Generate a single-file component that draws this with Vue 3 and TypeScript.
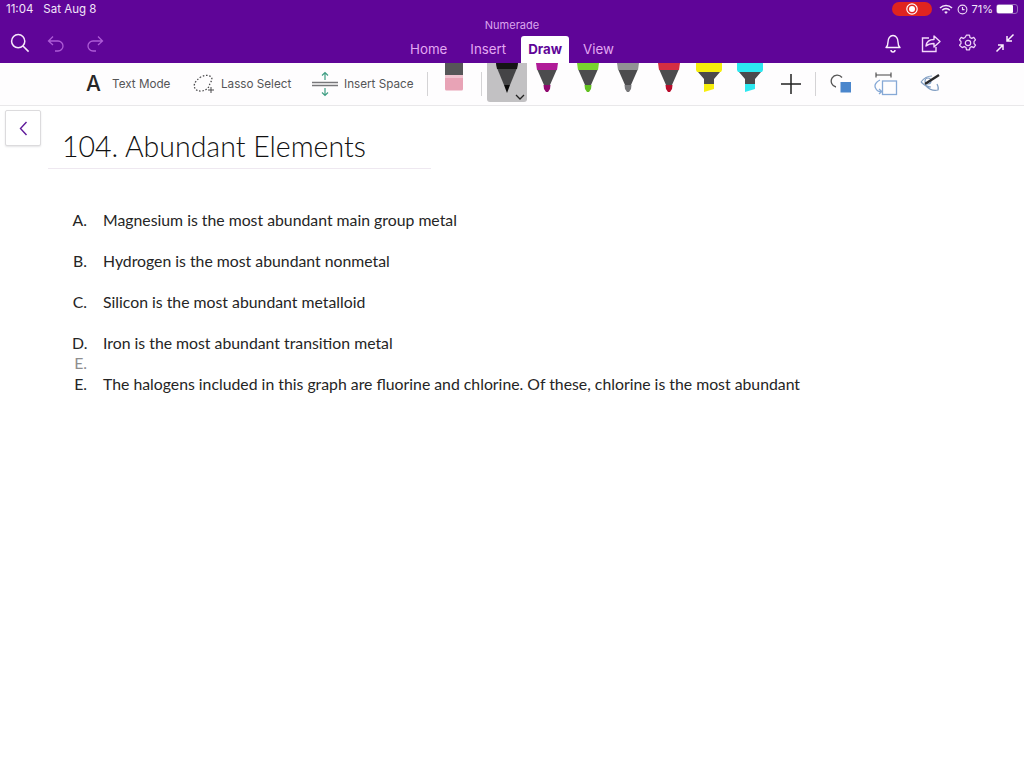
<script setup lang="ts">
interface Pen { band: string; tip: string; body: string }
interface Line { mark: string; text: string; muted?: boolean; gap?: boolean }

const tabs: string[] = ['Home', 'Insert', 'Draw', 'View']
const pens: Pen[] = [
  { band: '#b01c98', tip: '#90096f', body: '#4c4c4e' },
  { band: '#78d42e', tip: '#62c021', body: '#4c4c4e' },
  { band: '#929294', tip: '#77777a', body: '#4c4c4e' },
  { band: '#d42e42', tip: '#b80c2c', body: '#4c4c4e' }
]
const highlighters: string[] = ['#f6ee0c', '#2de8f0']
const lines: Line[] = [
  { mark: 'A.', text: 'Magnesium is the most abundant main group metal', gap: true },
  { mark: 'B.', text: 'Hydrogen is the most abundant nonmetal', gap: true },
  { mark: 'C.', text: 'Silicon is the most abundant metalloid', gap: true },
  { mark: 'D.', text: 'Iron is the most abundant transition metal' },
  { mark: 'E.', text: '', muted: true },
  { mark: 'E.', text: 'The halogens included in this graph are fluorine and chlorine. Of these, chlorine is the most abundant' }
]
</script>

<template>
  <div class="app">
    <header class="head">
      <div class="status">
        <div class="clock"><span>11:04</span><span>Sat Aug 8</span></div>
        <div class="sys">
          <span class="rec"><svg width="14" height="14" viewBox="0 0 14 14"><circle cx="7" cy="7" r="5.2" fill="none" stroke="#fff" stroke-width="1.2"/><circle cx="7" cy="7" r="3" fill="#fff"/></svg></span>
          <svg class="wifi" width="14" height="11" viewBox="0 0 14 11"><path d="M1 4a8.500 8.500 0 0 1 12 0M3.200 6.200a5.400 5.400 0 0 1 7.600 0" fill="none" stroke="#f3e6fa" stroke-width="1.600"/><path d="M5.200 8.100a2.600 2.600 0 0 1 3.600 0L7 10z" fill="#f3e6fa"/></svg>
          <svg width="11" height="11" viewBox="0 0 11 11"><circle cx="5.500" cy="5.500" r="4.400" fill="none" stroke="#eed9f6" stroke-width="1.100"/><path d="M5.500 3v2.600h2" fill="none" stroke="#eed9f6" stroke-width="1.200"/></svg>
          <span class="pct">71%</span>
          <span class="battery"><i></i></span>
        </div>
      </div>
      <div class="bar">
        <div class="side">
          <svg width="20" height="20" viewBox="0 0 20 20"><circle cx="8.200" cy="8.200" r="6.600" fill="none" stroke="#f7e9fb" stroke-width="1.500"/><path d="M13 13l5.600 5.600" stroke="#f7e9fb" stroke-width="1.600" fill="none"/></svg>
          <svg class="undo" width="18" height="18" viewBox="0 0 18 18"><path d="M6 2.500L1.500 7 6 11M1.500 7H11a5 5 0 0 1 0 10H8" fill="none" stroke="#ad5bd6" stroke-width="1.300"/></svg>
          <svg class="redo" width="18" height="18" viewBox="0 0 18 18"><path d="M12 2.500L16.500 7 12 11M16.500 7H7a5 5 0 0 0 0 10h3" fill="none" stroke="#ad5bd6" stroke-width="1.300"/></svg>
        </div>
        <div class="center">
          <div class="doc">Numerade</div>
          <nav class="tabs">
            <span v-for="t in tabs" :key="t" class="tab" :class="{ active: t === 'Draw' }">{{ t }}</span>
          </nav>
        </div>
        <div class="side right">
          <svg class="bell" width="18" height="20" viewBox="0 0 18 20"><path d="M2 14.500c1.600-1.400 2-2.800 2-5.500 0-3.500 2-6.500 5-6.500s5 3 5 6.500c0 2.700.4 4.100 2 5.500z" fill="none" stroke="#fbf0fd" stroke-width="1.400" stroke-linejoin="round"/><path d="M7 17a2 2 0 0 0 4 0" fill="none" stroke="#fbf0fd" stroke-width="1.400"/></svg>
          <svg class="share" width="20" height="20" viewBox="0 0 20 20"><path d="M8 5H1.500v13.500H15V14" fill="none" stroke="#f4d9fa" stroke-width="1.400"/><path d="M5 13c.5-4 3.500-6.500 8-6.500V3l6 5.500-6 5.500v-3.500c-3.500 0-6 .8-8 2.500z" fill="none" stroke="#f4d9fa" stroke-width="1.400" stroke-linejoin="round"/></svg>
          <svg class="gear" width="18" height="18" viewBox="0 0 18 18"><circle cx="9" cy="9" r="2.700" fill="none" stroke="#f0d4f8" stroke-width="1.200"/><path d="M7.500 1.200h3l.5 2.300 1.700.9 2.100-1 1.700 2.400-1.500 1.700v2l1.500 1.700-1.700 2.400-2.100-1-1.700.9-.5 2.300h-3l-.5-2.300-1.700-.9-2.100 1L.5 11.200 2 9.500v-2L.5 5.800l1.700-2.400 2.100 1L6 3.500z" fill="none" stroke="#f0d4f8" stroke-width="1.200" stroke-linejoin="round"/></svg>
          <svg width="20" height="20" viewBox="0 0 20 20"><path d="M18.500 1.500L12 8M12 3v5h5M1.500 18.500L8 12M3 12h5v5" fill="none" stroke="#fbf0fd" stroke-width="1.500"/></svg>
        </div>
      </div>
    </header>

    <section class="tools">
      <span class="bigA">A</span>
      <span class="label mode">Text Mode</span>
      <svg class="lasso" width="22" height="20" viewBox="0 0 22 20"><path d="M7 3.500C10 1 17 .5 18.500 3.500 20 6.500 17 8 16.500 11c-.3 2-3 5.500-8 6C3 17.500.5 14 1.500 10 2 8 4.500 5.500 7 3.500z" fill="none" stroke="#4a4a4c" stroke-width="1.300" stroke-dasharray="1.500 1.700"/><path d="M15 16h6M18 13v6" stroke="#4a4a4c" stroke-width="1"/></svg>
      <span class="label select">Lasso Select</span>
      <svg class="space" width="26" height="26" viewBox="0 0 26 26"><path d="M0 11.500h26M0 14.500h26" stroke="#77777a" stroke-width="1.300"/><path d="M13 9V2M10 4.500L13 1.500l3 3M13 17v7M10 21.500l3 3 3-3" fill="none" stroke="#3f9e83" stroke-width="1.200"/></svg>
      <span class="label insert">Insert Space</span>
      <i class="rule r1"></i>
      <svg class="eraser" width="20" height="28" viewBox="0 0 20 28"><path d="M1 0h18v13H1z" fill="#565658"/><path d="M1 12h18v14a1.500 1.500 0 0 1-1.500 1.500h-15A1.500 1.500 0 0 1 1 26z" fill="#e8a3b6"/><path d="M1 12h18v3H1z" fill="#f0c3d0"/></svg>
      <i class="rule r2"></i>
      <div class="active-pen">
        <svg width="24" height="32" viewBox="0 0 24 32"><path d="M1 0h22l-1 5-7 17H9L2 5z" fill="#444446"/><path d="M1 0h22l-1 6H2z" fill="#151516"/><path d="M9 22h6l-3 8z" fill="#0a0a0a"/></svg>
        <svg class="chev" width="10" height="6" viewBox="0 0 10 6"><path d="M1 1l4 4 4-4" fill="none" stroke="#222" stroke-width="1.300"/></svg>
      </div>
      <div class="pens">
        <svg v-for="p in pens" :key="p.band" width="24" height="32" viewBox="0 0 24 32"><path d="M2 6h20l-7 16H9z" :fill="p.body"/><path d="M1 0h22l-1 7H2z" :fill="p.band"/><path d="M8.500 22h7l-.5 4-2 3h-2l-2-3z" :fill="p.tip"/></svg>
        <svg v-for="h in highlighters" :key="h" width="26" height="32" viewBox="0 0 26 32"><path d="M0 0h26v7l-1 2H1L0 7z" :fill="h"/><path d="M2 9h22l-6 7v5H8v-5z" fill="#4c4a4c"/><path d="M8 21h10v5L8 29z" :fill="h"/></svg>
      </div>
      <svg class="plus" width="20" height="20" viewBox="0 0 20 20"><path d="M0 10h20M10 0v20" stroke="#222" stroke-width="1.500"/></svg>
      <i class="rule r3"></i>
      <svg class="shape" width="22" height="20" viewBox="0 0 22 20"><path d="M12 3.500A6 6 0 1 0 6 13" fill="none" stroke="#555" stroke-width="1.300"/><rect x="10.500" y="8" width="10.500" height="10.500" fill="#4a86cc"/></svg>
      <svg class="convert" width="26" height="24" viewBox="0 0 26 24"><path d="M2 3h15M2 .5v5M17 .5v5" fill="none" stroke="#444" stroke-width="1.100"/><rect x="8.500" y="9" width="14" height="13.500" fill="none" stroke="#86a9d6" stroke-width="1.300"/><path d="M6 8C2 10 0 13 1.500 16c1.200 2.500 3.500 4 6 3.500M5 17l2.800 2.500L5 22" fill="none" stroke="#86a9d6" stroke-width="1.300"/></svg>
      <svg class="ink" width="24" height="20" viewBox="0 0 24 20"><path d="M1 9c3-4 7-6 11-6M1 9c3 3 6 5 10 5M6 13c3 3 8 5 12 4 1-2 0-4-1-6" fill="none" stroke="#7f9dc2" stroke-width="1.200"/><circle cx="8" cy="8" r="3" fill="none" stroke="#7f9dc2" stroke-width="1.200"/><path d="M5 11L19 2" stroke="#2a2a2c" stroke-width="2.400"/></svg>
    </section>

    <main class="page">
      <button class="back" type="button" aria-label="Back"><svg width="9" height="15" viewBox="0 0 9 15"><path d="M7.500 1L1.500 7.500l6 6.500" fill="none" stroke="#5f1a9a" stroke-width="1.400"/></svg></button>
      <div class="note">
        <h1>104. Abundant Elements</h1>
        <ol class="list">
          <li v-for="(l, i) in lines" :key="i" :class="{ gap: l.gap, muted: l.muted }">
            <span class="mark">{{ l.mark }}</span><span>{{ l.text }}</span>
          </li>
        </ol>
      </div>
    </main>
  </div>
</template>

<style>
html, body { margin: 0; background: #fff; }
</style>

<style scoped>
.app { width: 1024px; height: 768px; display: flex; flex-direction: column; background: #fff; overflow: hidden; font-family: Inter, "Liberation Sans", sans-serif; }
.head { height: 63px; background: #5f0598; color: #fff; flex: none; }
.status { height: 17px; display: flex; justify-content: space-between; align-items: center; padding: 1px 4px 0 6px; box-sizing: border-box; font-size: 11.500px; color: #f3e6fa; }
.clock { display: flex; gap: 10px; }
.sys { display: flex; align-items: center; }
.rec { width: 40px; height: 14px; border-radius: 7px; background: #e0241f; display: flex; align-items: center; justify-content: center; margin-right: 7px; }
.wifi { margin-right: 4px; }
.pct { margin: 0 3px 0 3px; font-size: 11px; }
.battery { width: 22px; height: 10px; border: 1px solid #9a6cbc; border-radius: 3px; box-sizing: border-box; display: block; margin-right: 2px; }
.battery i { display: block; width: 78%; height: 100%; background: #fff; border-radius: 1px; }
.bar { height: 46px; display: grid; grid-template-columns: 1fr auto 1fr; }
.side { display: flex; align-items: center; padding: 0 0 0 10px; height: 36px; margin-top: 8px; }
.undo { margin-left: 17px; }
.redo { margin-left: 21px; }
.right { justify-content: flex-end; padding: 0 9px 0 0; gap: 18px; }
.bell { margin-right: 1px; }
.share { margin-right: 0; }
.center { display: flex; flex-direction: column; align-items: center; }
.doc { font-size: 11px; color: #dba6ee; line-height: 14px; margin-top: 1px; }
.tabs { display: flex; gap: 0; margin-top: 4px; align-items: flex-end; }
.tab { font-size: 13.300px; line-height: 27px; height: 27px; color: #e3a8f2; }
.tab:first-child { padding-right: 23px; }
.tab:nth-child(2) { padding-right: 15px; }
.tab:last-child { margin-left: 14px; }
.active { background: #fff; color: #5f0598; font-weight: 700; border-radius: 3px 3px 0 0; width: 48px; text-align: center; box-sizing: border-box; }
.tools { height: 42px; flex: none; display: flex; align-items: flex-start; background: #fefdfe; border-bottom: 1px solid #e9e8ea; }
.bigA { margin: 8px 0 0 86px; font-size: 21px; line-height: 25px; font-weight: 500; color: #262628; width: 15px; }
.label { font-size: 11.700px; line-height: 42px; color: #555557; white-space: nowrap; }
.mode { margin-left: 11px; width: 58px; }
.lasso { margin: 11px 0 0 23px; }
.select { margin-left: 6px; width: 72px; }
.space { margin: 8px 0 0 19px; }
.insert { margin-left: 6px; width: 70px; }
.rule { display: block; width: 1px; height: 24px; background: #d4d3d5; margin-top: 9px; flex: none; }
.r1 { margin-left: 13px; }
.eraser { margin: 0 0 0 16px; }
.r2 { margin-left: 17px; }
.active-pen { width: 40px; height: 39px; margin-left: 5px; background: #c2c1c3; border-radius: 0 0 3px 3px; display: flex; justify-content: center; position: relative; }
.chev { position: absolute; right: 2px; bottom: 2px; }
.pens { display: flex; margin-left: 8px; gap: 16.600px; }
.pens svg:nth-child(5) { margin-left: -1.500px; }
.pens svg:nth-child(6) { margin-left: -1px; }
.plus { margin: 11px 0 0 18px; }
.r3 { margin-left: 14px; }
.shape { margin: 11px 0 0 14px; }
.convert { margin: 9px 0 0 22px; }
.ink { margin: 10px 0 0 20px; }
.page { flex: 1; display: flex; align-items: flex-start; }
.back { width: 36px; height: 36px; margin: 4px 0 0 5px; padding: 0; background: #fff; border: 1px solid #dcdbdd; border-radius: 2px; box-shadow: 0 1px 2px #e4e4e6; display: flex; align-items: center; justify-content: center; flex: none; }
.note { margin-left: 7px; font-family: Lato, "Open Sans", sans-serif; color: #252525; }
h1 { width: 369px; margin: 0; padding: 21px 0 3px 14px; font-size: 28.500px; line-height: 38px; font-weight: 300; color: #111; border-bottom: 1px solid #eee8f0; }
.list { list-style: none; margin: 0; padding: 40.500px 0 0 24px; font-size: 15.800px; line-height: 20.500px; }
.list li { display: flex; white-space: nowrap; }
.list li.gap { margin-bottom: 20.500px; }
.list li.muted { color: #8e8e8e; }
.mark { width: 15px; margin-right: 16px; flex: none; text-align: right; white-space: nowrap; }
</style>
